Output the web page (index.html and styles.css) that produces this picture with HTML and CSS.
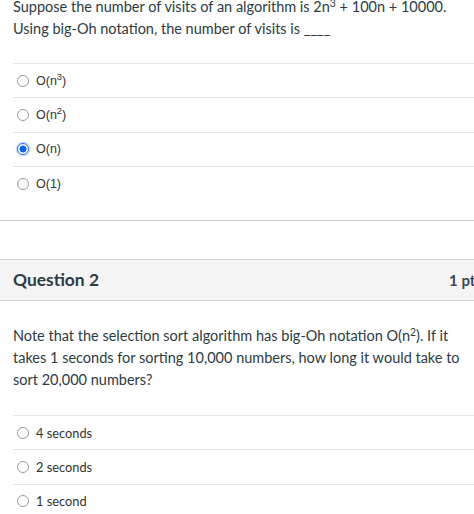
FILE: index.html
```html
<!DOCTYPE html>
<html lang="en">
<head>
<meta charset="utf-8">
<title>Quiz</title>
<link rel="stylesheet" href="styles.css">
</head>
<body>
<div class="page">
  <section class="question q1">
    <div class="question-text">Suppose the number of visits of an algorithm is 2n<sup>3</sup> + 100n + 10000. Using big-Oh notation, the number of visits is ____</div>
    <div class="answers math">
      <div class="answer"><span class="radio"></span><span class="label">O(n<sup>3</sup>)</span></div>
      <div class="answer"><span class="radio"></span><span class="label">O(n<sup>2</sup>)</span></div>
      <div class="answer"><span class="radio checked"></span><span class="label">O(n)</span></div>
      <div class="answer"><span class="radio"></span><span class="label">O(1)</span></div>
    </div>
  </section>
  <hr class="divider">
  <section class="question q2">
    <header class="question-header">
      <h2 class="question-title">Question 2</h2>
      <span class="points">1 pts</span>
    </header>
    <div class="question-text">Note that the selection sort algorithm has big-Oh notation O(n<sup>2</sup>). If it takes 1 seconds for sorting 10,000 numbers, how long it would take to sort 20,000 numbers?</div>
    <div class="answers">
      <div class="answer"><span class="radio"></span><span class="label">4 seconds</span></div>
      <div class="answer"><span class="radio"></span><span class="label">2 seconds</span></div>
      <div class="answer"><span class="radio"></span><span class="label">1 second</span></div>
    </div>
  </section>
</div>
</body>
</html>
```
FILE: styles.css
```css
html, body {
  margin: 0;
  padding: 0;
  overflow: hidden;
  background: #ffffff;
}
body {
  font-family: Lato, "Noto Sans", sans-serif;
  font-size: 14.5px;
  color: #2d3b45;
}
.page {
  width: 474px;
}
.question-text {
  padding-left: 13px;
  line-height: 22.3px;
}
.question-text sup {
  font-size: 0.72em;
  line-height: 0;
  vertical-align: 0.5em;
}
.q1 .question-text {
  margin-top: -4px;
  margin-bottom: 22.5px;
}
.answers {
  margin-left: 13px;
}
.answer {
  display: flex;
  align-items: center;
  height: 33.3px;
  border-top: 1px solid #e6e6e6;
  padding-left: 4px;
  gap: 7px;
  font-size: 12.8px;
  color: #333333;
}
.math .label {
  font-family: "Liberation Sans", Arial, sans-serif;
  font-size: 12.5px;
  color: #333333;
}
.label sup {
  font-size: 0.75em;
  line-height: 0;
  vertical-align: 0.55em;
}
.radio {
  box-sizing: border-box;
  width: 12px;
  height: 12px;
  border-radius: 50%;
  border: 1px solid #9a9a9a;
  background: #ffffff;
  flex: none;
}
.radio.checked {
  border: 1px solid #1a6fe0;
  background: radial-gradient(circle, #0b63e5 0 3.2px, #ffffff 3.8px 100%);
  box-shadow: 0 0 0 1.5px #cfe0fa;
}
.divider {
  margin: 19.7px 0 0 0;
  border: 0;
  border-top: 1px solid #c7cdd1;
  height: 0;
}
.question-header {
  margin-top: 38px;
  margin-right: -21px;
  height: 40px;
  border-top: 1px solid #d4d8db;
  border-bottom: 1px solid #d4d8db;
  background: #f5f5f5;
  display: flex;
  align-items: center;
  justify-content: space-between;
  padding: 0 13px;
}
.question-title {
  margin: 0;
  font-size: 17.4px;
  font-weight: 700;
  color: #2d3b45;
}
.points {
  font-size: 15px;
  font-weight: 700;
  color: #3d4a53;
}
.q2 .question-text {
  margin-top: 24px;
  line-height: 22px;
  margin-bottom: 24px;
}
```
